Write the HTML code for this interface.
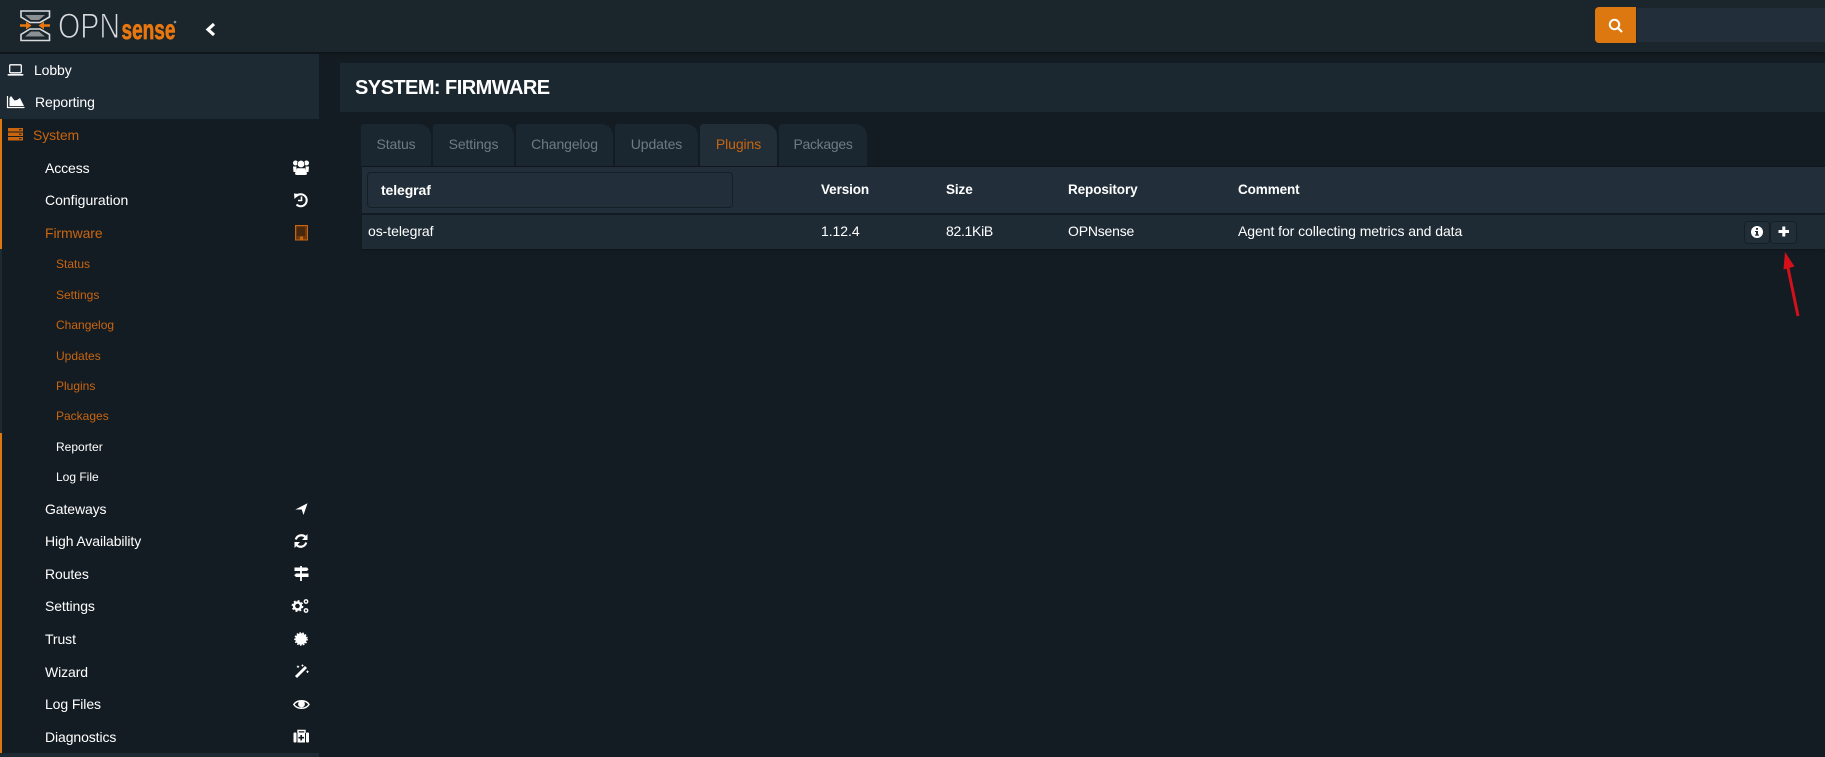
<!DOCTYPE html>
<html lang="en"><head><meta charset="utf-8"><title>System: Firmware</title>
<style>
*{box-sizing:border-box}
html,body{margin:0;padding:0;width:1825px;height:757px;overflow:hidden;background:#141c23;font-family:"Liberation Sans",sans-serif;color:#fff;font-size:14px}
.a{position:absolute;white-space:nowrap}
#top{left:0;top:0;width:1825px;height:52px;background:#1a252c;box-shadow:0 2px 3px #0e1418}
#nav1{left:0;top:54px;width:319px;height:65px;background:#1e2a33}
#sb1{left:0;top:119px;width:2px;height:130px;background:#dd7810}
#sb2{left:0;top:249px;width:2px;height:184px;background:#1e2a33}
#sb3{left:0;top:433px;width:2px;height:320px;background:#dd7810}
#sbb{left:0;top:753px;width:319px;height:4px;background:#1e2a33}
.n{position:absolute;line-height:20px;height:20px;white-space:nowrap;letter-spacing:-.1px;color:#fff}
.o{color:#c8650f}
.s{font-size:12px;letter-spacing:0;left:56px}
.m{left:45px}
#title{left:340px;top:63px;width:1485px;height:49px;background:#1c2830}
#title span{position:absolute;left:15px;top:13px;font-size:20px;line-height:24px;font-weight:bold;letter-spacing:-.55px}
.tab{position:absolute;top:124px;height:42px;background:#1b2730;border-top-right-radius:12px;border-top-left-radius:3px;color:#6f7b83;line-height:41px;text-align:center;font-size:14px;letter-spacing:-.1px}
.tab.on{background:#212e38;color:#c8650f}
#thead{left:362px;top:167px;width:1463px;height:46px;background:#222f3a}
#trow{left:362px;top:215px;width:1463px;height:34px;background:#1e2b34;box-shadow:0 1px 2px #0e1418}
#sline{left:362px;top:166px;width:1463px;height:1px;background:#10161b}
#search{left:367px;top:172px;width:366px;height:36px;background:#222f3a;border:1px solid #171f26;border-radius:4px}
#search span{position:absolute;left:13px;top:7px;line-height:20px;font-weight:bold;font-size:14px;letter-spacing:-.1px}
.th{position:absolute;top:180px;line-height:20px;font-weight:bold;font-size:13.5px;letter-spacing:-.1px}
.td{position:absolute;top:221px;line-height:20px;font-size:14px;letter-spacing:-.06px}
.btn{position:absolute;top:221px;height:23px;background:#212e38;border:1px solid #171f26;border-radius:4px}
#sbtn{left:1595px;top:7px;width:41px;height:36px;background:#dd7810;border-radius:4px 0 0 4px}
#sinput{left:1637px;top:8px;width:188px;height:34px;background:#222f3a}
svg{position:absolute;left:0;top:0;overflow:visible}
</style></head><body>
<div class="a" id="top"></div>
<div class="a" id="nav1"></div>
<div class="a" id="sb1"></div><div class="a" id="sb2"></div><div class="a" id="sb3"></div><div class="a" id="sbb"></div>
<div class="a" id="sbtn"></div><div class="a" id="sinput"></div>

<div class="n" style="left:34px;top:60px">Lobby</div>
<div class="n" style="left:35px;top:92px">Reporting</div>
<div class="n o" style="left:33px;top:125px">System</div>
<div class="n m" style="top:158px">Access</div>
<div class="n m" style="top:190px;letter-spacing:0">Configuration</div>
<div class="n m o" style="top:223px">Firmware</div>
<div class="n s o" style="top:254px">Status</div>
<div class="n s o" style="top:285px">Settings</div>
<div class="n s o" style="top:315px">Changelog</div>
<div class="n s o" style="top:346px">Updates</div>
<div class="n s o" style="top:376px">Plugins</div>
<div class="n s o" style="top:406px">Packages</div>
<div class="n s" style="top:437px">Reporter</div>
<div class="n s" style="top:467px">Log File</div>
<div class="n m" style="top:499px">Gateways</div>
<div class="n m" style="top:531px">High Availability</div>
<div class="n m" style="top:564px">Routes</div>
<div class="n m" style="top:596px">Settings</div>
<div class="n m" style="top:629px">Trust</div>
<div class="n m" style="top:662px">Wizard</div>
<div class="n m" style="top:694px">Log Files</div>
<div class="n m" style="top:727px">Diagnostics</div>

<div class="a" id="title"><span>SYSTEM: FIRMWARE</span></div>
<div class="tab" style="left:361px;width:70px">Status</div>
<div class="tab" style="left:433px;width:81px">Settings</div>
<div class="tab" style="left:516px;width:97px">Changelog</div>
<div class="tab" style="left:615px;width:83px">Updates</div>
<div class="tab on" style="left:700px;width:77px">Plugins</div>
<div class="tab" style="left:779px;width:88px;letter-spacing:-.3px">Packages</div>
<div class="a" id="sline"></div>
<div class="a" id="thead"></div>
<div class="a" id="trow"></div>
<div class="a" id="search"><span>telegraf</span></div>
<div class="th" style="left:821px">Version</div>
<div class="th" style="left:946px">Size</div>
<div class="th" style="left:1068px">Repository</div>
<div class="th" style="left:1238px">Comment</div>
<div class="td" style="left:368px">os-telegraf</div>
<div class="td" style="left:821px">1.12.4</div>
<div class="td" style="left:946px;letter-spacing:-.3px">82.1KiB</div>
<div class="td" style="left:1068px;letter-spacing:-.2px">OPNsense</div>
<div class="td" style="left:1238px">Agent for collecting metrics and data</div>
<div class="btn" style="left:1744px;width:26px"></div>
<div class="btn" style="left:1770px;width:27px"></div>

<svg width="1825" height="757" viewBox="0 0 1825 757">
 <!-- logo -->
 <g fill="none" stroke="#d8dbdd" stroke-width="1.6">
  <path d="M21 11H49.500V17L40 22.500H30L21 17Z"/>
  <path d="M21 40.500H49.500V34.500L40 29H30L21 34.500Z"/>
 </g>
 <path d="M25 15H45L39 20H31Z M25 36.500H45L39 31.500H31Z" fill="#8b9094"/>
 <g fill="#e8770f">
  <path d="M20 24.300H26V21.500L31.500 25.500L26 29.500V26.700H20Z"/>
  <path d="M50 24.300H44V21.500L38.500 25.500L44 29.500V26.700H50Z"/>
 </g>
 <text x="58" y="38" font-family="Liberation Sans" font-size="35" textLength="62" lengthAdjust="spacingAndGlyphs" fill="#d8dbdd" stroke="#1a252c" stroke-width="1.1">OPN</text>
 <text x="121.500" y="39" font-family="Liberation Sans" font-weight="bold" font-size="28" textLength="54" lengthAdjust="spacingAndGlyphs" fill="#e8770f" stroke="#e8770f" stroke-width=".7">sense</text>
 <circle cx="175" cy="22" r="1.300" fill="#8b9094"/>
 <path d="M214 24L208 29.500L214 35" fill="none" stroke="#fff" stroke-width="3.200"/>
 <!-- search -->
 <circle cx="1614.500" cy="24.500" r="4.700" fill="none" stroke="#fff" stroke-width="2"/>
 <path d="M1618 28L1622 32" stroke="#fff" stroke-width="2.200"/>
 <!-- laptop -->
 <rect x="9.700" y="64.800" width="11.600" height="8" rx="1" fill="none" stroke="#fff" stroke-width="1.300"/>
 <rect x="7.500" y="74" width="16" height="1.600" rx=".8" fill="#fff"/>
 <!-- area chart -->
 <path d="M7.500 96V107.500H24.500" fill="none" stroke="#fff" stroke-width="1.200"/>
 <path d="M9.500 106V98L11 96L14.500 100.500L17 100L20 98L24 106Z" fill="#fff"/>
 <!-- server -->
 <g fill="#c8650f">
  <rect x="8" y="128" width="15" height="3.500"/><rect x="8" y="132.500" width="15" height="3.500"/><rect x="8" y="137" width="15" height="3.500"/>
 </g>
 <g fill="#2a1a0a"><rect x="19" y="129.200" width="2.500" height="1"/><rect x="19" y="133.700" width="2.500" height="1"/><rect x="19" y="138.200" width="2.500" height="1"/></g>
 <!-- users -->
 <g fill="#fff">
  <circle cx="295.500" cy="163" r="2.500"/><circle cx="306.500" cy="163" r="2.500"/>
  <path d="M293 166.500H296.500L296 172H293.500Z M309 166.500H305.500L306 172H308.500Z"/>
  <circle cx="301" cy="164" r="3.700" stroke="#141c23" stroke-width=".6"/>
  <path d="M296.800 168.300H305.200L307 173.500Q307 175 305 175H297Q295 175 295 173.500Z" />
 </g>
 <!-- history -->
 <path d="M296 196.500A6 6 0 1 1 296.500 204.500" fill="none" stroke="#fff" stroke-width="2"/>
 <path d="M294 193.500L299.500 194L294.500 199Z" fill="#fff"/>
 <path d="M301.500 196.500V200.500H298" fill="none" stroke="#fff" stroke-width="1.600"/>
 <!-- building -->
 <rect x="295.500" y="225.500" width="12" height="14.500" fill="#6f3a0e" stroke="#c8650f"/>
 <path d="M298 227V236M300 227V236M302 227V236M304 227V236" stroke="#1a130e" stroke-width=".9"/>
 <rect x="300" y="236.500" width="3" height="3" fill="#c8650f"/>
 <!-- location -->
 <path d="M295.300 509.500L307.500 503.300L303.500 515L301.700 509.500Z" fill="#fff"/>
 <!-- refresh -->
 <path d="M295.800 539.500A5.800 5.800 0 0 1 305.500 537M306.200 542.500A5.800 5.800 0 0 1 296.500 545" fill="none" stroke="#fff" stroke-width="2.200"/>
 <path d="M307.500 534V540H302Z M294.500 548V542H300Z" fill="#fff"/>
 <!-- map signs -->
 <path d="M301 566V581" stroke="#fff" stroke-width="1.800"/>
 <path d="M294.500 567.500H307L308.500 569.200L307 571H294.500Z M296 573.500H308.500V577H296L294.200 575.300Z" fill="#fff"/>
 <!-- cogs -->
 <circle cx="297.500" cy="606" r="3.500" fill="none" stroke="#fff" stroke-width="2.400"/>
 <circle cx="297.500" cy="606" r="5.200" fill="none" stroke="#fff" stroke-width="1.400" stroke-dasharray="2 2.080"/>
 <circle cx="306" cy="601.500" r="1.700" fill="none" stroke="#fff" stroke-width="1.400"/>
 <circle cx="306" cy="610.500" r="1.700" fill="none" stroke="#fff" stroke-width="1.400"/>
 <!-- certificate -->
 <circle cx="301" cy="639" r="5.700" fill="#fff"/>
 <circle cx="301" cy="639" r="6.100" fill="none" stroke="#fff" stroke-width="1.400" stroke-dasharray="1.500 1.500"/>
 <!-- magic -->
 <path d="M296 677L306 667" stroke="#fff" stroke-width="2.800"/>
 <path d="M298 665.500V668M296.800 666.700H299.200M307.500 670.500V673M306.300 671.700H308.700M302.500 664.500V666.500M301.500 665.500H303.500" stroke="#fff" stroke-width=".9"/>
 <!-- eye -->
 <path d="M293.800 704.500C297 699.500 306 699.500 309 704.500C306 709.500 297 709.500 293.800 704.500Z" fill="none" stroke="#fff" stroke-width="1.400"/>
 <circle cx="301.500" cy="704" r="3.400" fill="#fff"/>
 <!-- medkit -->
 <path d="M298 733V730.500H305V733" fill="none" stroke="#fff" stroke-width="1.400"/>
 <rect x="293.500" y="732.500" width="3" height="10" rx="1" fill="#fff"/>
 <rect x="306" y="732.500" width="3" height="10" rx="1" fill="#fff"/>
 <rect x="297.500" y="732.500" width="7.500" height="10" fill="#fff"/>
 <path d="M301.200 735V740.500M298.500 737.700H304" stroke="#141c23" stroke-width="1.700"/>
 <!-- info -->
 <circle cx="1757" cy="232" r="6" fill="#fff"/>
 <g fill="#212e38"><rect x="1756" y="228" width="2" height="1.800"/><rect x="1756" y="231" width="2" height="4"/><rect x="1755" y="231" width="1" height="1"/><rect x="1755" y="234.500" width="4" height="1.200"/></g>
 <!-- plus -->
 <path d="M1783.800 226.500V236.500M1778.500 231.500H1789" stroke="#fff" stroke-width="3"/>
 <!-- red arrow -->
 <path d="M1798 316L1788 268" stroke="#d5101a" stroke-width="3" fill="none"/>
 <path d="M1785 252L1783.500 269.500L1794.500 266.500Z" fill="#d5101a"/>
</svg>
</body></html>
